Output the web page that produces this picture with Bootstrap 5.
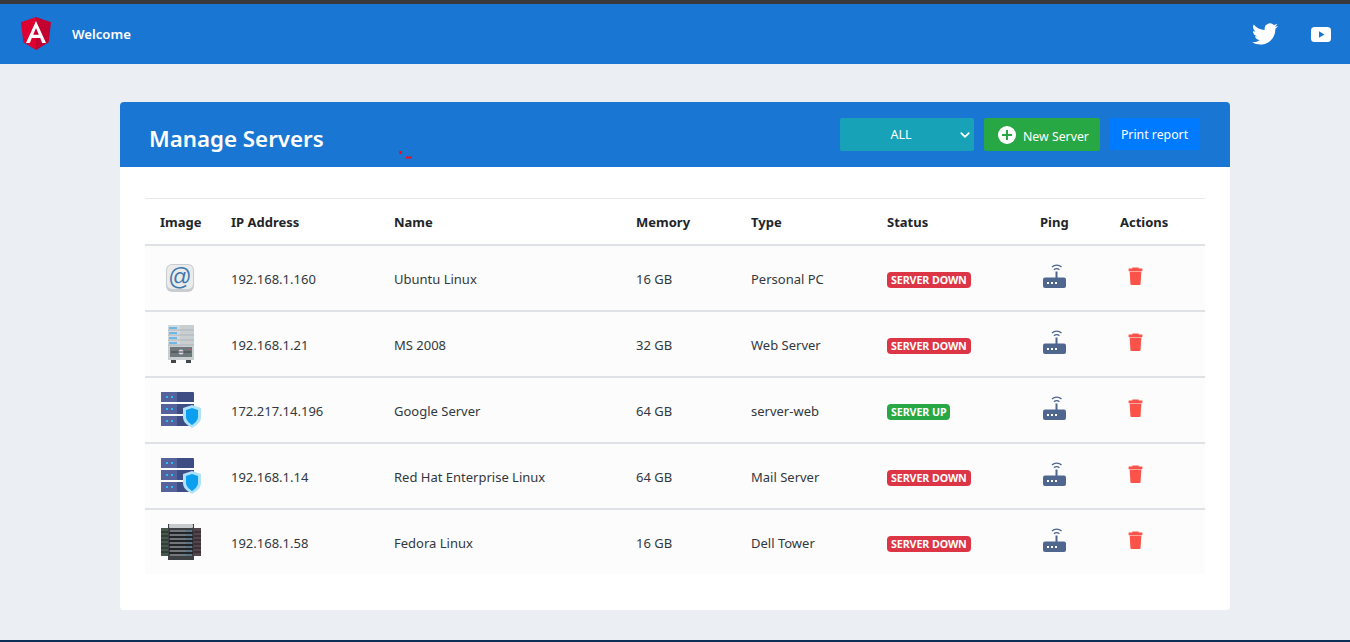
<!DOCTYPE html>
<html lang="en">
<head>
    <meta charset="UTF-8">
    <meta name="viewport" content="width=device-width, initial-scale=1.0">
    <title>Manage Servers</title>
    <link href="https://cdn.jsdelivr.net/npm/bootstrap@5.3.2/dist/css/bootstrap.min.css" rel="stylesheet">
    <style>
        body {
            font-family: "Noto Sans", "Open Sans", sans-serif;
            background: #ebeff3;
            height: 642px;
            overflow: hidden;
            color: #212529;
        }
        .top-strip { height: 4px; background: #3a3a3a; }
        .bottom-strip { height: 2px; background: #0c2f57; }
        .app-bar { height: 60px; background: #1976d2; padding: 0 19px 0 20px; }
        .app-bar .navbar-brand { font-size: 13.2px; font-weight: 600; color: #fff; margin: 2px 0 0 20px; padding: 0; }
        .bar-icons { gap: 33px; }
        .page-main { height: 576px; padding: 38px 120px 0; }
        .srv-card { height: 508px; border: 0; border-radius: 4px; overflow: hidden; position: relative; }
        .srv-head { height: 65px; background: #1976d2; padding: 16px 30px 0; }
        .srv-head h2 { font-size: 22.3px; font-weight: 600; color: #fff; margin: 8px 0 0 -1px; }
        .head-tools { gap: 10px; }
        .srv-filter {
            width: 134px; height: 33px; padding: 2px 12px 0 0; border: 0; border-radius: 2px;
            background-color: #17a2b8; color: #fff; font-size: 12.5px; text-align: center;
            background-image: url("data:image/svg+xml,%3csvg xmlns='http://www.w3.org/2000/svg' viewBox='0 0 16 16'%3e%3cpath fill='none' stroke='%23fff' stroke-linecap='round' stroke-linejoin='round' stroke-width='2.8' d='m2 5 6 6 6-6'/%3e%3c/svg%3e");
            background-position: right 4px top 12px; background-size: 10px 10px;
        }
        .btn-new { height: 33px; width: 116px; padding: 0 0 0 14px; border-radius: 2px; background: #28a745; border: 0; color: #fff; font-size: 12.3px; gap: 7px; }
        .btn-new span { margin-top: 6px; }
        .btn-print { height: 32px; width: 91px; padding: 3px 0 0; margin-left: -1px; border-radius: 2px; background: #007bff; border: 0; color: #fff; font-size: 12.3px; }
        .speck { position: absolute; left: 278px; top: 48px; }
        .srv-body { padding: 31px 25px 0; }
        .srv-table { table-layout: fixed; width: 1060px; margin: 0; font-size: 13px; }
        .srv-table th { font-size: 13px; font-weight: 700; height: 46px; padding: 3px 15px 0; vertical-align: middle; border-top: 1px solid #e6e9ec; border-bottom: 2px solid #dee2e6; white-space: nowrap; }
        .srv-table td { height: 66px; padding: 4px 15px 0; vertical-align: middle; background: #fcfcfc; border-bottom: 2px solid #dee2e6; box-shadow: none; color: #32383e; }
        .srv-table tr:last-child td { border-bottom: 0; height: 65px; }
        .cw-img { width: 71px; } .cw-ip { width: 163px; } .cw-name { width: 242px; } .cw-mem { width: 115px; }
        .cw-type { width: 136px; } .cw-stat { width: 153px; } .cw-ping { width: 80px; } .cw-act { width: 100px; }
        .srv-table td.cell-img { padding: 0 0 0 15px; }
        .srv-table td.cell-icon { padding-top: 0; }
        .state-pill { font-size: 10.7px; font-weight: 700; padding: 2px 4px; border-radius: 4px; line-height: 12px; display: inline-block; letter-spacing: -.1px; }
        .state-down { background: #dc3545; color: #fff; }
        .state-up { background: #28a745; color: #fff; }
        .ping-glyph { display: block; margin: -3px 0 0 3px; }
        .trash-glyph { display: block; margin: -4px 0 0 8px; }
        .box-glyph { display: block; margin-left: 8px; }
        .mail-glyph { display: block; margin-left: 5px; }
    </style>
</head>
<body>
<div class="top-strip"></div>
<nav class="navbar app-bar d-flex justify-content-between flex-nowrap">
    <div class="d-flex align-items-center">
        <svg width="32" height="34" viewBox="0 0 32 34">
            <path fill="#dd0031" d="M16 0 1 5.300l2.300 20L16 33z"/>
            <path fill="#c3002f" d="M16 0l15 5.300-2.300 20L16 33z"/>
            <path fill="#fff" d="M16 4 6 26h3.800l2-5h8.400l2 5H26zM13.200 17.700 16 11l2.800 6.700z"/>
        </svg>
        <span class="navbar-brand">Welcome</span>
    </div>
    <div class="d-flex align-items-center bar-icons">
        <svg width="26" height="26" viewBox="0 0 24 24">
            <path fill="#fff" d="M23.953 4.570a10 10 0 0 1-2.825.775 4.958 4.958 0 0 0 2.163-2.723c-.951.555-2.005.959-3.127 1.184a4.920 4.920 0 0 0-8.384 4.482C7.690 8.095 4.067 6.130 1.640 3.162a4.822 4.822 0 0 0-.666 2.475c0 1.710.870 3.213 2.188 4.096a4.904 4.904 0 0 1-2.228-.616v.060a4.923 4.923 0 0 0 3.946 4.827 4.996 4.996 0 0 1-2.212.085 4.936 4.936 0 0 0 4.604 3.417 9.867 9.867 0 0 1-6.102 2.105c-.390 0-.779-.023-1.170-.067a13.995 13.995 0 0 0 7.557 2.209c9.053 0 13.998-7.496 13.998-13.985 0-.210 0-.420-.015-.630A9.935 9.935 0 0 0 24 4.590z"/>
        </svg>
        <svg width="20" height="15" viewBox="0 0 20 15">
            <rect width="20" height="15" rx="3.500" fill="#fff"/>
            <path fill="#1976d2" d="M8 4.200v6.600l5.500-3.300z"/>
        </svg>
    </div>
</nav>
<main class="page-main">
    <div class="card srv-card">
        <div class="srv-head d-flex justify-content-between align-items-start">
            <h2>Manage Servers</h2>
            <div class="d-flex head-tools">
                <select class="form-select srv-filter"><option>ALL</option></select>
                <button class="btn btn-new d-flex align-items-center">
                    <svg width="18" height="18" viewBox="0 0 18 18">
                        <circle cx="9" cy="9" r="9" fill="#fff"/>
                        <path stroke="#28a745" stroke-width="2" d="M9 4v10M4 9h10"/>
                    </svg>
                    <span>New Server</span>
                </button>
                <button class="btn btn-print">Print report</button>
            </div>
        </div>
        <svg class="speck" width="16" height="10" viewBox="0 0 16 10">
            <rect x="1" y="1" width="3" height="3" fill="#f0101c"/>
            <rect x="8" y="6.500" width="6" height="2" fill="#f0101c"/>
        </svg>
        <div class="srv-body">
            <table class="table srv-table">
                <colgroup>
                    <col class="cw-img"><col class="cw-ip"><col class="cw-name"><col class="cw-mem">
                    <col class="cw-type"><col class="cw-stat"><col class="cw-ping"><col class="cw-act">
                </colgroup>
                <thead>
                    <tr>
                        <th>Image</th><th>IP Address</th><th>Name</th><th>Memory</th>
                        <th>Type</th><th>Status</th><th>Ping</th><th>Actions</th>
                    </tr>
                </thead>
                <tbody id="rows"></tbody>
            </table>
        </div>
    </div>
</main>
<div class="bottom-strip"></div>

<script src="https://cdn.jsdelivr.net/npm/bootstrap@5.3.2/dist/js/bootstrap.bundle.min.js"></script>
<script>
    const mailIcon = `<svg width="30" height="30" viewBox="0 0 30 30" class="mail-glyph"><rect x="1" y="1" width="28" height="28" rx="6" fill="#c9cdd0"/><rect x="2" y="2" width="26" height="24" rx="5" fill="#e9ebed"/><text x="15" y="21.500" text-anchor="middle" font-size="23" font-family="Liberation Sans" fill="#3f78ad">@</text></svg>`;
    const boxIcon = `<svg width="26" height="40" viewBox="0 0 26 40" class="box-glyph"><rect x="0" y="1" width="26" height="35" fill="#c9ced1"/><rect x="0" y="1" width="12" height="20" fill="#d5d9db"/><path fill="#6db7ea" d="M1 3h8v2H1zM1 8h8v2H1zM1 13h8v2H1zM1 18h8v2H1z"/><path stroke="#aeb4b8" d="M0 6h26M0 11h26M0 16h26M0 21h26"/><rect x="2" y="23" width="22" height="10" fill="#6f777d"/><circle cx="13" cy="28" r="2.500" fill="#d6dadc"/><path stroke="#41464b" d="M3 28h20"/><path fill="#e05050" d="M21 25h2v1h-2z"/><path fill="#41a060" d="M21 30h2v1h-2z"/><path fill="#41464b" d="M3 36h5v3H3zM18 36h5v3h-5z"/></svg>`;
    const rackIcon = `<svg width="42" height="38" viewBox="0 0 42 38" class="d-block"><path fill="#3f4d85" d="M2 1h31a1 1 0 0 1 1 1v9H1V2a1 1 0 0 1 1-1zM1 13h33v10H1zM1 25h33v9a1 1 0 0 1-1 1H2a1 1 0 0 1-1-1z"/><path fill="#55629b" d="M2 1h15v10H1V2a1 1 0 0 1 1-1zM1 13h16v10H1zM1 25h16v10H2a1 1 0 0 1-1-1z"/><path fill="#27c0ee" d="M6 5h2v2H6zM11 5h2v2h-2zM6 17h2v2H6zM11 17h2v2h-2zM6 29h2v2H6zM11 29h2v2h-2z"/><path fill="#aee2fa" d="M32 14 41 17v9c0 5-4 8-9 11-5-3-9-6-9-11v-9z"/><path fill="#0c9ff0" d="M32 17 38 19v7c0 3-3 6-6 8-3-2-6-5-6-8v-7z"/></svg>`;
    const towerIcon = `<svg width="42" height="38" viewBox="0 0 42 38" class="d-block"><rect x="1" y="5" width="7" height="28" fill="#465a4c"/><rect x="34" y="5" width="7" height="28" fill="#54454a"/><rect x="8" y="1" width="26" height="36" fill="#3d4144"/><rect x="9" y="1" width="24" height="4" rx="1" fill="#c8cbcd"/><path stroke="#1f2224" d="M1 9h7M1 13h7M1 17h7M1 21h7M1 25h7M1 29h7M34 9h7M34 13h7M34 17h7M34 21h7M34 25h7M34 29h7"/><path stroke="#a9aeb2" stroke-width="1.200" d="M10 8h22M10 12h22M10 16h22M10 20h22M10 24h22M10 28h22M10 32h22"/><path stroke="#41708f" stroke-width="1.200" d="M26 8h5M26 12h5M26 16h5M26 20h5M26 24h5M26 28h5M26 32h5"/><path stroke="#1a1c1e" stroke-width="1.500" d="M9 10h24M9 14h24M9 18h24M9 22h24M9 26h24M9 30h24"/></svg>`;
    const pingIcon = `<svg width="24" height="24" viewBox="0 0 24 24" class="ping-glyph"><path fill="none" stroke="#4f668f" stroke-width="1.300" d="M9 3c2.500-2.400 7-2.400 9.500 0M11 5.700c1.400-1.300 4-1.300 5.400 0"/><rect x="12.500" y="7.500" width="2" height="7" fill="#4f668f"/><rect x="0" y="13.500" width="23" height="10.500" rx="2" fill="#4f668f"/><path fill="#fff" d="M4 18h2v2H4zM8 18h2v2H8zM12 18h2v2h-2z"/></svg>`;
    const trashIcon = `<svg width="15" height="18" viewBox="0 0 14 17" class="trash-glyph"><path fill="#fb5349" d="M.5 1.500h13V4H.5zM4 .5h6V2H4zM1.500 4.500h11l-.7 11.500a1 1 0 0 1-1 1H3.200a1 1 0 0 1-1-1z"/></svg>`;

    const servers = [
        { icon: mailIcon, ip: '192.168.1.160', name: 'Ubuntu Linux', memory: '16 GB', type: 'Personal PC', up: false },
        { icon: boxIcon, ip: '192.168.1.21', name: 'MS 2008', memory: '32 GB', type: 'Web Server', up: false },
        { icon: rackIcon, ip: '172.217.14.196', name: 'Google Server', memory: '64 GB', type: 'server-web', up: true },
        { icon: rackIcon, ip: '192.168.1.14', name: 'Red Hat Enterprise Linux', memory: '64 GB', type: 'Mail Server', up: false },
        { icon: towerIcon, ip: '192.168.1.58', name: 'Fedora Linux', memory: '16 GB', type: 'Dell Tower', up: false }
    ];

    document.getElementById('rows').innerHTML = servers.map(s => `
        <tr>
            <td class="cell-img">${s.icon}</td>
            <td>${s.ip}</td>
            <td>${s.name}</td>
            <td>${s.memory}</td>
            <td>${s.type}</td>
            <td><span class="state-pill ${s.up ? 'state-up' : 'state-down'}">${s.up ? 'SERVER UP' : 'SERVER DOWN'}</span></td>
            <td class="cell-icon">${pingIcon}</td>
            <td class="cell-icon">${trashIcon}</td>
        </tr>`).join('');
</script>
</body>
</html>
